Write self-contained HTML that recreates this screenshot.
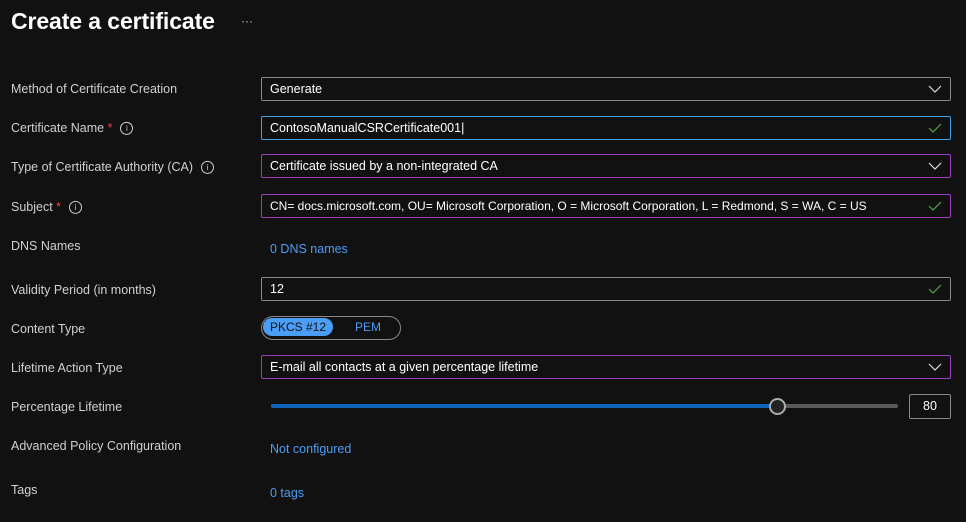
<!DOCTYPE html><html><head><style>
body{margin:0;width:966px;height:522px;background:#111111;font-family:"Liberation Sans",sans-serif;color:#fff;position:relative;overflow:hidden}
.a{position:absolute}
h1{position:absolute;left:11px;top:8px;margin:0;font-size:23px;font-weight:bold;color:#fff;letter-spacing:-0.1px}
.l{position:absolute;left:11px;font-size:12.5px;color:#d0d0d0;transform:translateY(-50%);margin-top:1px}
.l b{color:#e8404a;font-weight:normal}
.i{display:inline-block;width:11px;height:11px;border:1px solid #ccc;border-radius:50%;font-size:8px;text-align:center;line-height:11px;vertical-align:middle;margin-left:8px;color:#ccc}
.in{position:absolute;left:261px;border:1px solid #8a8886;border-radius:2px;font-size:12.5px;line-height:22px;padding-left:8px;box-sizing:border-box;width:690px;height:24px;color:#fff}
.p{border-color:#9b3fbf}.b{border-color:#4aa0e6}
.ch{position:absolute;right:8px;top:5px}
.lk{position:absolute;left:270px;font-size:12.5px;color:#4f9cf5;transform:translateY(-50%);margin-top:1px}
</style></head><body>
<h1>Create a certificate</h1>
<div class="a" style="left:241px;top:14px;color:#ccc;font-size:12px">···</div>
<div class="l" style="top:88px">Method of Certificate Creation</div>
<div class="l" style="top:127px">Certificate Name <b>*</b><span class="i">i</span></div>
<div class="l" style="top:166px">Type of Certificate Authority (CA)<span class="i">i</span></div>
<div class="l" style="top:206px">Subject <b>*</b><span class="i">i</span></div>
<div class="l" style="top:245px">DNS Names</div>
<div class="l" style="top:289px">Validity Period (in months)</div>
<div class="l" style="top:328px">Content Type</div>
<div class="l" style="top:367px">Lifetime Action Type</div>
<div class="l" style="top:406px">Percentage Lifetime</div>
<div class="l" style="top:445px">Advanced Policy Configuration</div>
<div class="l" style="top:489px">Tags</div>

<div class="in" style="top:77px">Generate<svg class="ch" width="14" height="12"><path d="M1 3l6 6 6-6" stroke="#ddd" fill="none" stroke-width="1.2"/></svg></div>
<div class="in b" style="top:116px">ContosoManualCSRCertificate001|<svg class="ch" width="14" height="12"><path d="M1 6l4 4 8-8" stroke="#57a64a" fill="none" stroke-width="1.2"/></svg></div>
<div class="in p" style="top:154px">Certificate issued by a non-integrated CA<svg class="ch" width="14" height="12"><path d="M1 3l6 6 6-6" stroke="#ddd" fill="none" stroke-width="1.2"/></svg></div>
<div class="in p" style="top:194px;font-size:12px">CN= docs.microsoft.com, OU= Microsoft Corporation, O = Microsoft Corporation, L = Redmond, S = WA, C = US<svg class="ch" width="14" height="12"><path d="M1 6l4 4 8-8" stroke="#57a64a" fill="none" stroke-width="1.2"/></svg></div>
<div class="lk" style="top:248px">0 DNS names</div>
<div class="in" style="top:277px">12<svg class="ch" width="14" height="12"><path d="M1 6l4 4 8-8" stroke="#57a64a" fill="none" stroke-width="1.2"/></svg></div>
<div class="a" style="left:261px;top:316px;width:138px;height:22px;border:1px solid #888;border-radius:12px"></div>
<div class="a" style="left:263px;top:318px;width:70px;height:18px;background:#4a9ef5;border-radius:10px;color:#111;font-size:12px;line-height:18px;text-align:center">PKCS #12</div>
<div class="a" style="left:355px;top:318px;color:#4f9cf5;font-size:12px;line-height:18px">PEM</div>
<div class="in p" style="top:355px">E-mail all contacts at a given percentage lifetime<svg class="ch" width="14" height="12"><path d="M1 3l6 6 6-6" stroke="#ddd" fill="none" stroke-width="1.2"/></svg></div>
<div class="a" style="left:271px;top:404px;width:627px;height:4px;background:#5a5a5a;border-radius:2px"></div>
<div class="a" style="left:271px;top:404px;width:506px;height:4px;background:#0f62b8;border-radius:2px"></div>
<div class="a" style="left:769px;top:398px;width:13px;height:13px;border:2px solid #aaa;border-radius:50%;background:#222"></div>
<div class="a" style="left:909px;top:394px;width:40px;height:23px;border:1px solid #888;border-radius:2px;font-size:12.5px;line-height:23px;text-align:center">80</div>
<div class="lk" style="top:448px">Not configured</div>
<div class="lk" style="top:492px">0 tags</div>
</body></html>
